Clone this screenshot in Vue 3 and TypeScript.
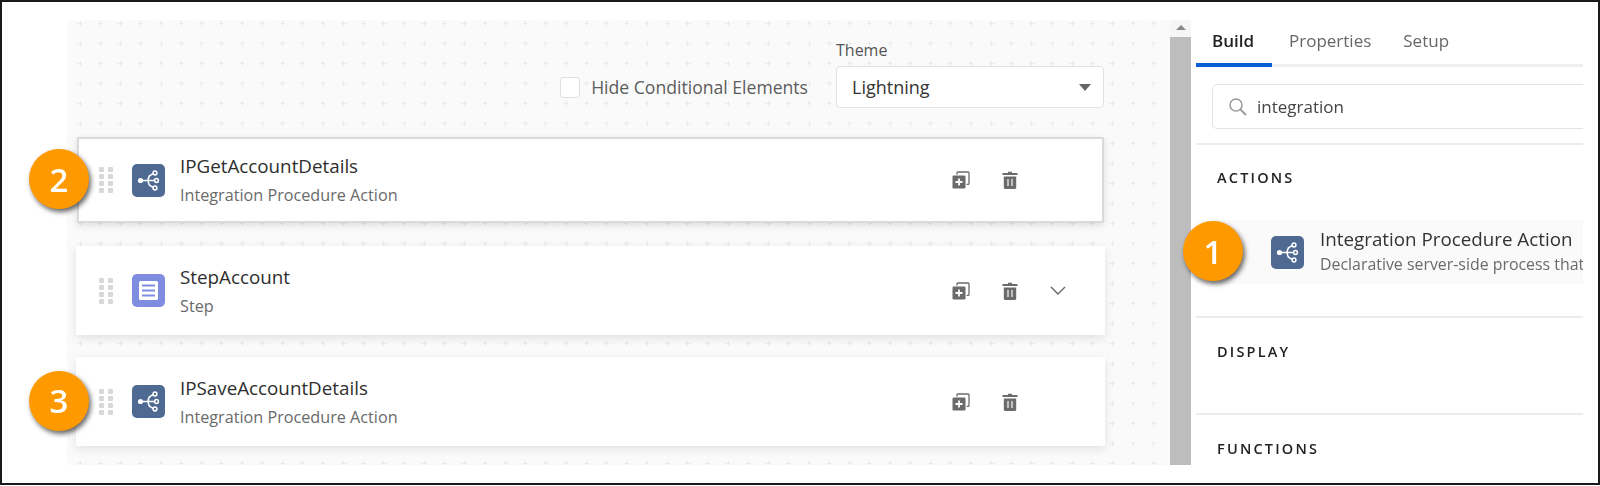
<script setup lang="ts">
interface Card {
  name: string
  sub: string
  kind: 'ip' | 'step'
  cls: string
  badge?: number
  chevron?: boolean
}
const cards: Card[] = [
  { name: 'IPGetAccountDetails', sub: 'Integration Procedure Action', kind: 'ip', cls: 'selected', badge: 2 },
  { name: 'StepAccount', sub: 'Step', kind: 'step', cls: 'tall', chevron: true },
  { name: 'IPSaveAccountDetails', sub: 'Integration Procedure Action', kind: 'ip', cls: 'tall', badge: 3 },
]
const tabs = ['Build', 'Properties', 'Setup']
</script>

<template>
  <div class="frame">
    <main class="canvas">
      <div class="toolbar">
        <label class="hide"><span class="check"></span><span>Hide Conditional Elements</span></label>
        <div class="theme">
          <div class="theme-label">Theme</div>
          <div class="select"><span>Lightning</span><i class="caret"></i></div>
        </div>
      </div>
      <div v-for="c in cards" :key="c.name" class="card" :class="c.cls">
        <span v-if="c.badge" class="badge card-badge">{{ c.badge }}</span>
        <span class="grip"><i v-for="n in 8" :key="n"></i></span>
        <span class="tile" :class="c.kind">
          <svg v-if="c.kind === 'ip'" viewBox="0 0 33 33" width="33" height="33">
            <path d="M10 16.5H22M22.5 9.5C14 11 14 22 22.5 23.5M16.5 12.5L21 9.5M16.5 20.5L21 23.5" fill="none" stroke="#fff" stroke-width="1.5" />
            <circle cx="8.5" cy="16.5" r="2.6" fill="#fff" />
            <g fill="#4f6a92" stroke="#fff" stroke-width="1.5"><circle cx="23" cy="9" r="1.9" /><circle cx="24.5" cy="16.5" r="1.9" /><circle cx="23" cy="24" r="1.9" /></g>
          </svg>
          <svg v-else viewBox="0 0 33 33" width="33" height="33">
            <rect x="7" y="7" width="19" height="19" rx="1.5" fill="#fff" />
            <path d="M10 11.5H23M10 16.5H23M10 21.5H23" stroke="#7f8de1" stroke-width="1.8" />
          </svg>
        </span>
        <span class="text">
          <span class="name">{{ c.name }}</span>
          <span class="sub">{{ c.sub }}</span>
        </span>
        <span class="actions">
          <svg viewBox="0 0 18 18" width="18" height="18">
            <path d="M5 3.5V1.8C5 1.3 5.3 1 5.8 1H16C16.6 1 17 1.4 17 2V12.5C17 13 16.6 13.4 16 13.4H14.6" fill="none" stroke="#6b6b6b" stroke-width="1.3" />
            <rect x="0.5" y="4.5" width="13" height="13" rx="1.2" fill="#6b6b6b" />
            <path d="M7 7.5V14.5M3.5 11H10.5" stroke="#fff" stroke-width="1.8" />
          </svg>
          <svg viewBox="0 0 16 18" width="16" height="18">
            <path d="M6 2V.8H10V2H15.5V4H.5V2Z" fill="#6b6b6b" />
            <path d="M1.8 5.5H14.2V16.8C14.2 17.4 13.8 18 13 18H3C2.2 18 1.8 17.4 1.8 16.8Z" fill="#6b6b6b" />
            <path d="M6 8V15M10 8V15" stroke="#ddd" stroke-width="1.5" />
          </svg>
          <span class="chev-slot">
            <svg v-if="c.chevron" viewBox="0 0 16 9" width="16" height="9">
              <path d="M1 1L8 8L15 1" fill="none" stroke="#666" stroke-width="1.4" />
            </svg>
          </span>
        </span>
      </div>
    </main>

    <div class="scrollbar"><span class="scroll-btn"><i></i></span><span class="thumb"></span></div>

    <aside class="panel">
      <nav class="tabs">
        <span v-for="(t, i) in tabs" :key="t" class="tab" :class="{ active: i === 0 }">{{ t }}</span>
      </nav>
      <div class="search-wrap">
        <div class="search">
          <svg viewBox="0 0 20 20" width="20" height="20">
            <circle cx="8" cy="8" r="6" fill="none" stroke="#9a9a9a" stroke-width="1.5" />
            <path d="M12.5 12.5L18 18" stroke="#9a9a9a" stroke-width="1.8" />
          </svg>
          <span>integration</span>
        </div>
      </div>
      <section class="sec actions-sec">
        <h3>ACTIONS</h3>
        <div class="item">
          <span class="badge item-badge">1</span>
          <span class="tile ip">
            <svg viewBox="0 0 33 33" width="33" height="33">
              <path d="M10 16.5H22M22.5 9.5C14 11 14 22 22.5 23.5M16.5 12.5L21 9.5M16.5 20.5L21 23.5" fill="none" stroke="#fff" stroke-width="1.5" />
              <circle cx="8.5" cy="16.5" r="2.6" fill="#fff" />
              <g fill="#4f6a92" stroke="#fff" stroke-width="1.5"><circle cx="23" cy="9" r="1.9" /><circle cx="24.5" cy="16.5" r="1.9" /><circle cx="23" cy="24" r="1.9" /></g>
            </svg>
          </span>
          <span class="item-text">
            <span class="item-name">Integration Procedure Action</span>
            <span class="item-sub">Declarative server-side process that</span>
          </span>
        </div>
      </section>
      <section class="sec display-sec"><h3>DISPLAY</h3></section>
      <section class="sec functions-sec"><h3>FUNCTIONS</h3></section>
    </aside>
  </div>
</template>

<style scoped>
.frame {
  box-sizing: border-box;
  width: 1600px;
  height: 485px;
  border: 2px solid #1a1a1a;
  background: #fff;
  display: flex;
  align-items: flex-start;
  padding: 18px 15px 0 65px;
  font-family: "Open Sans", "Noto Sans", sans-serif;
  overflow: hidden;
  color: #2b2b2b;
}
.canvas {
  box-sizing: border-box;
  width: 1103px;
  height: 445px;
  flex: none;
  padding: 0 0 0 9px;
  background-color: #fafafa;
  background-image: url("data:image/svg+xml,%3Csvg xmlns='http://www.w3.org/2000/svg' width='20.25' height='20'%3E%3Cpath d='M13 1V6M10.5 3.5H15.5' stroke='%23e9e9e9' stroke-width='1'/%3E%3C/svg%3E");
  background-size: 20.25px 20px;
  filter: blur(0.5px);
}
.toolbar {
  height: 117px;
  box-sizing: border-box;
  display: flex;
  width: 1028px;
  justify-content: flex-end;
  align-items: flex-start;
  padding: 20px 0 0;
}
.hide {
  display: flex;
  align-items: center;
  gap: 11px;
  margin-top: 35px;
  margin-right: 28px;
  font-size: 17.6px;
  color: #5c5c5c;
}
.check {
  width: 20px;
  height: 21px;
  box-sizing: border-box;
  background: #fff;
  border: 1px solid #e0e0e0;
  border-radius: 3px;
}
.theme { width: 268px; }
.theme-label {
  font-size: 16px;
  line-height: 21px;
  color: #555;
  margin-bottom: 5px;
}
.select {
  box-sizing: border-box;
  height: 42px;
  background: #fff;
  border: 1px solid #e2e2e2;
  border-radius: 4px;
  display: flex;
  align-items: center;
  justify-content: space-between;
  padding: 0 12px 0 15px;
  font-size: 18px;
  color: #333;
}
.caret {
  width: 0;
  height: 0;
  border-left: 6px solid transparent;
  border-right: 6px solid transparent;
  border-top: 7px solid #666;
}
.card {
  position: relative;
  box-sizing: border-box;
  width: 1029px;
  background: #fff;
  display: flex;
  align-items: center;
  padding-left: 23px;
  box-shadow: 0 3px 9px rgba(0, 0, 0, 0.1);
}
.card.selected {
  height: 86px;
  width: 1027px;
  margin: 0 1px 23px;
  padding-left: 20px;
  border: 2px solid #dadada;
  box-shadow: 0 2px 7px rgba(0, 0, 0, 0.12);
}
.card.selected .actions { padding-right: 36px; }
.card.selected .card-badge { left: -50px; }
.card.tall {
  height: 89px;
  margin-bottom: 22px;
}
.grip {
  display: grid;
  grid-template-columns: 5px 5px;
  grid-auto-rows: 5px;
  gap: 2px 4px;
  width: 14px;
}
.grip i {
  background: #d8d8d8;
  border-radius: 1px;
}
.tile {
  width: 33px;
  height: 33px;
  flex: none;
  border-radius: 5px;
  display: block;
}
.tile svg { display: block; }
.tile.ip { background: #4f6a92; }
.tile.step { background: #7f8de1; }
.card .tile { margin-left: 19px; }
.text {
  display: flex;
  flex-direction: column;
  margin-left: 15px;
}
.name {
  font-size: 18.8px;
  line-height: 24px;
  color: #2e2e2e;
}
.sub {
  font-size: 16.2px;
  line-height: 21px;
  margin-top: 7px;
  color: #6a6a6a;
}
.actions {
  margin-left: auto;
  display: flex;
  align-items: center;
  gap: 32px;
  padding-right: 39px;
}
.chev-slot {
  width: 16px;
  display: flex;
}
.badge {
  width: 60px;
  height: 60px;
  border-radius: 50%;
  background: #ff9900;
  color: #fff;
  font-size: 33px;
  font-weight: 600;
  display: flex;
  align-items: center;
  justify-content: center;
  box-shadow: 2px 3px 5px rgba(0, 0, 0, 0.6);
  z-index: 2;
}
.card-badge {
  position: absolute;
  left: -47px;
  top: 50%;
  margin-top: -31px;
}
.scrollbar {
  width: 21px;
  height: 445px;
  flex: none;
  display: flex;
  flex-direction: column;
  filter: blur(0.5px);
}
.scroll-btn {
  height: 17px;
  background: #f6f6f6;
  display: flex;
  justify-content: center;
  padding-top: 5px;
  box-sizing: border-box;
}
.scroll-btn i {
  width: 0;
  height: 0;
  border-left: 5px solid transparent;
  border-right: 5px solid transparent;
  border-bottom: 5px solid #888;
}
.thumb {
  flex: 1;
  background: #bdbdbd;
}
.panel {
  box-sizing: border-box;
  width: 392px;
  height: 445px;
  padding-left: 5px;
  flex: none;
  filter: blur(0.5px);
  position: relative;
}
.tabs {
  display: flex;
  height: 47px;
  box-sizing: border-box;
  border-bottom: 3px solid #f0f0f0;
  font-size: 17px;
  color: #666;
}
.tab {
  padding: 9px 32px 0 0;
  height: 47px;
  box-sizing: border-box;
}
.tab.active {
  color: #222;
  font-weight: 600;
  border-bottom: 4px solid #0b5cd5;
  width: 76px;
  padding: 9px 0 0 16px;
  margin-right: 17px;
}
.search-wrap {
  height: 78px;
  box-sizing: border-box;
  padding: 17px 0 0 16px;
  border-bottom: 2px solid #ececec;
  overflow: hidden;
}
.search {
  box-sizing: border-box;
  height: 45px;
  width: 440px;
  border: 1px solid #e4e4e4;
  border-radius: 5px;
  display: flex;
  align-items: center;
  padding-left: 15px;
  gap: 9px;
  font-size: 17px;
  color: #444;
}
.sec {
  box-sizing: border-box;
  border-bottom: 2px solid #ececec;
}
.sec h3 {
  margin: 0;
  font-size: 14.5px;
  font-weight: 600;
  letter-spacing: 2.2px;
  line-height: 20px;
  color: #222;
  padding-left: 21px;
}
.actions-sec { height: 173px; padding-top: 23px; }
.display-sec { height: 97px; padding-top: 24px; }
.functions-sec { border-bottom: 0; padding-top: 24px; }
.item {
  margin-top: 32px;
  height: 64px;
  background: #fafafa;
  display: flex;
  align-items: center;
  padding-left: 75px;
  overflow: hidden;
}
.item-text {
  display: flex;
  flex-direction: column;
  margin-left: 16px;
  padding-bottom: 3px;
  white-space: nowrap;
}
.item-name {
  font-size: 18.8px;
  line-height: 24px;
  color: #333;
}
.item-sub {
  font-size: 15.9px;
  line-height: 20px;
  margin-top: 3px;
  color: #6a6a6a;
}
.item-badge {
  position: absolute;
  left: -8px;
  top: 201px;
}
</style>
